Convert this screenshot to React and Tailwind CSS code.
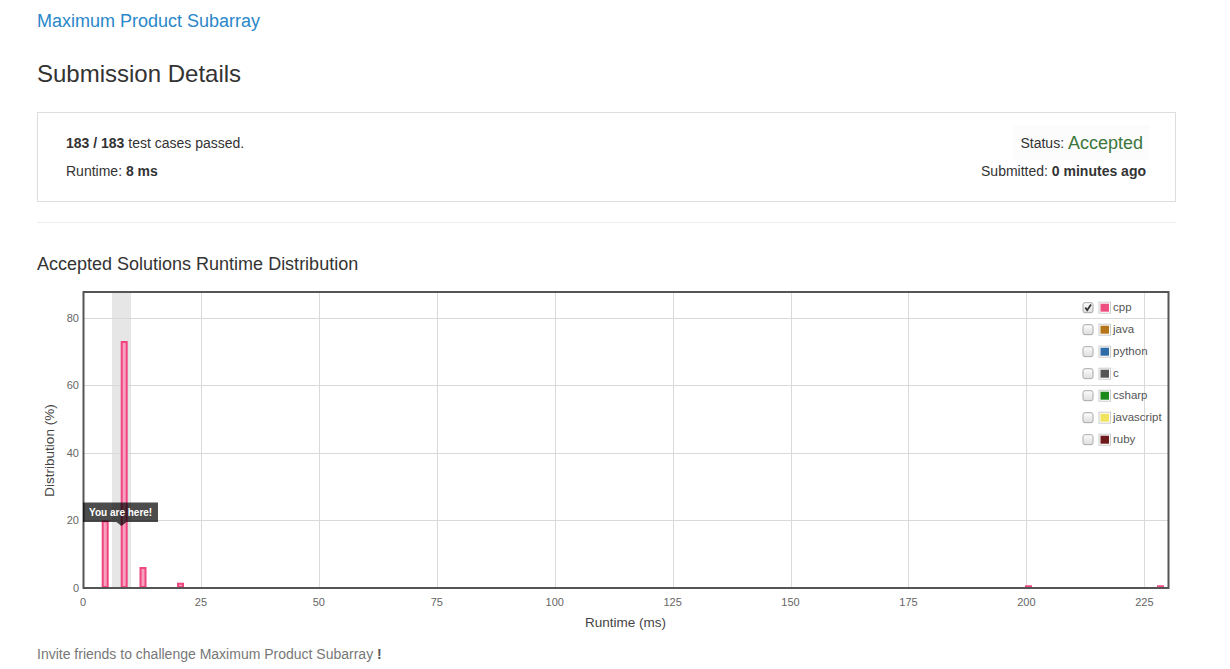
import React from "react";

const F = "'Liberation Sans', Arial, sans-serif";

const X0 = 46;
const PX_MS = 4.717;
const Y0 = 303;
const PX_PCT = 3.379;

const legend = [
  { name: "cpp", color: "#ee4d80", checked: true },
  { name: "java", color: "#b5761b" },
  { name: "python", color: "#2f6da8" },
  { name: "c", color: "#555555" },
  { name: "csharp", color: "#1b8a1b" },
  { name: "javascript", color: "#f2e35e" },
  { name: "ruby", color: "#6f1a1a" },
];

const bars = [
  { x: 64.7, top: 235.4 },
  { x: 83.7, top: 56 },
  { x: 102.5, top: 282 },
  { x: 140, top: 297.7 },
  { x: 988, top: 300.3 },
  { x: 1120, top: 300.3 },
];

function Chart() {
  const xt = [0, 25, 50, 75, 100, 125, 150, 175, 200, 225];
  const yt = [0, 20, 40, 60, 80];
  return (
    <svg width="1139" height="350" viewBox="0 0 1139 350" className="block">
      <rect x="75" y="7" width="19" height="295" fill="#e6e6e6" />
      {xt.slice(1).map((t) => {
        const x = Math.round(X0 + t * PX_MS) + 0.5;
        return <line key={"vx" + t} x1={x} y1="7" x2={x} y2="302" stroke="#d9d9d9" strokeWidth="1" />;
      })}
      {yt.slice(1).map((t) => {
        const y = Math.round(Y0 - t * PX_PCT) + 0.5;
        return <line key={"hy" + t} x1="47" y1={y} x2="1131" y2={y} stroke="#d9d9d9" strokeWidth="1" />;
      })}
      {bars.map((b, i) => (
        <rect
          key={i}
          x={b.x + 1}
          y={b.top + 1}
          width={5}
          height={Math.max(Y0 - b.top - 2, 0.5)}
          fill="#f8a1be"
          stroke="#ef4580"
          strokeWidth="2"
        />
      ))}
      <rect x="46.5" y="7" width="1085" height="296" fill="none" stroke="#555" strokeWidth="2" />
      {xt.map((t) => (
        <text
          key={"xl" + t}
          x={X0 + t * PX_MS}
          y="320.5"
          textAnchor="middle"
          fontFamily={F}
          fontSize="11"
          fill="#666"
        >
          {t}
        </text>
      ))}
      {yt.map((t) => (
        <text
          key={"yl" + t}
          x="42"
          y={Y0 - t * PX_PCT + 4}
          textAnchor="end"
          fontFamily={F}
          fontSize="11"
          fill="#666"
        >
          {t}
        </text>
      ))}
      <text
        x="0"
        y="0"
        transform="translate(17 165.5) rotate(-90)"
        textAnchor="middle"
        fontFamily={F}
        fontSize="13.5"
        fill="#444"
      >
        Distribution (%)
      </text>
      <text x="588.5" y="341.5" textAnchor="middle" fontFamily={F} fontSize="13.5" fill="#444">
        Runtime (ms)
      </text>
      <g>
        <rect x="46" y="217.5" width="75" height="19.5" fill="#000" opacity="0.7" />
        <polygon points="79.5,237 89.5,237 84.5,241" fill="#000" opacity="0.7" />
        <text x="52" y="230.5" fontFamily={F} fontSize="10" fontWeight="bold" fill="#fff">
          You are here!
        </text>
      </g>
      {legend.map((l, i) => {
        const cy = 22.7 + i * 22;
        return (
          <g key={l.name}>
            <rect
              x="1046"
              y={cy - 5}
              width="10"
              height="10"
              rx="2"
              fill="url(#cbg)"
              stroke="#a9a9a9"
              strokeWidth="1"
            />
            {l.checked && (
              <path
                d={`M${1048.3} ${cy - 0.3} L${1050.2} ${cy + 2.5} L${1054} ${cy - 3.3}`}
                fill="none"
                stroke="#333"
                strokeWidth="1.8"
              />
            )}
            <rect x="1062" y={cy - 5.5} width="11.5" height="11" fill="#fff" stroke="#ccc" strokeWidth="1" />
            <rect x="1063.5" y={cy - 4} width="8.5" height="8" fill={l.color} />
            <text x="1076" y={cy + 3} fontFamily={F} fontSize="11.5" fill="#555">
              {l.name}
            </text>
          </g>
        );
      })}
      <defs>
        <linearGradient id="cbg" x1="0" y1="0" x2="0" y2="1">
          <stop offset="0" stopColor="#fcfcfc" />
          <stop offset="1" stopColor="#dedede" />
        </linearGradient>
      </defs>
    </svg>
  );
}

export default function App() {
  return (
    <div className="min-h-[669px] bg-white font-['Liberation_Sans',Arial,sans-serif] text-[#333]">
      <div className="ml-[37px] w-[1139px]">
        <div className="pt-[11px]">
          <a className="block text-[18px] leading-[20px] text-[#2a87c9]">Maximum Product Subarray</a>
        </div>
        <h3 className="mt-[30px] text-[24px] leading-[26px] text-[#333]">Submission Details</h3>
        <div className="mt-[25px] flex h-[90px] justify-between border border-[#dddddd]">
          <div className="flex flex-col gap-[8px] pl-[28px] pt-[20px] text-[14px] leading-[20px]">
            <div>
              <b>183 / 183</b> test cases passed.
            </div>
            <div>
              Runtime: <b>8 ms</b>
            </div>
          </div>
          <div className="flex flex-col items-end pr-[25px] pt-[12px]">
            <div className="flex h-[35px] items-center bg-[#fcfcfc] px-[7px]">
              <span className="text-[14px] leading-[20px]">Status:&nbsp;</span>
              <span className="text-[18px] leading-[20px] text-[#3c763d]">Accepted</span>
            </div>
            <div className="mr-[4px] mt-[1px] text-[14px] leading-[20px]">
              Submitted: <b>0 minutes ago</b>
            </div>
          </div>
        </div>
        <div className="mt-[20px] h-px bg-[#eeeeee]" />
        <h4 className="mt-[31px] text-[18px] leading-[20px] text-[#333]">
          Accepted Solutions Runtime Distribution
        </h4>
        <div className="mt-[11px]">
          <Chart />
        </div>
        <div className="mt-[9px] text-[14px] leading-[20px] text-[#777]">
          Invite friends to challenge Maximum Product Subarray <b className="text-[#555]">!</b>
        </div>
      </div>
    </div>
  );
}
